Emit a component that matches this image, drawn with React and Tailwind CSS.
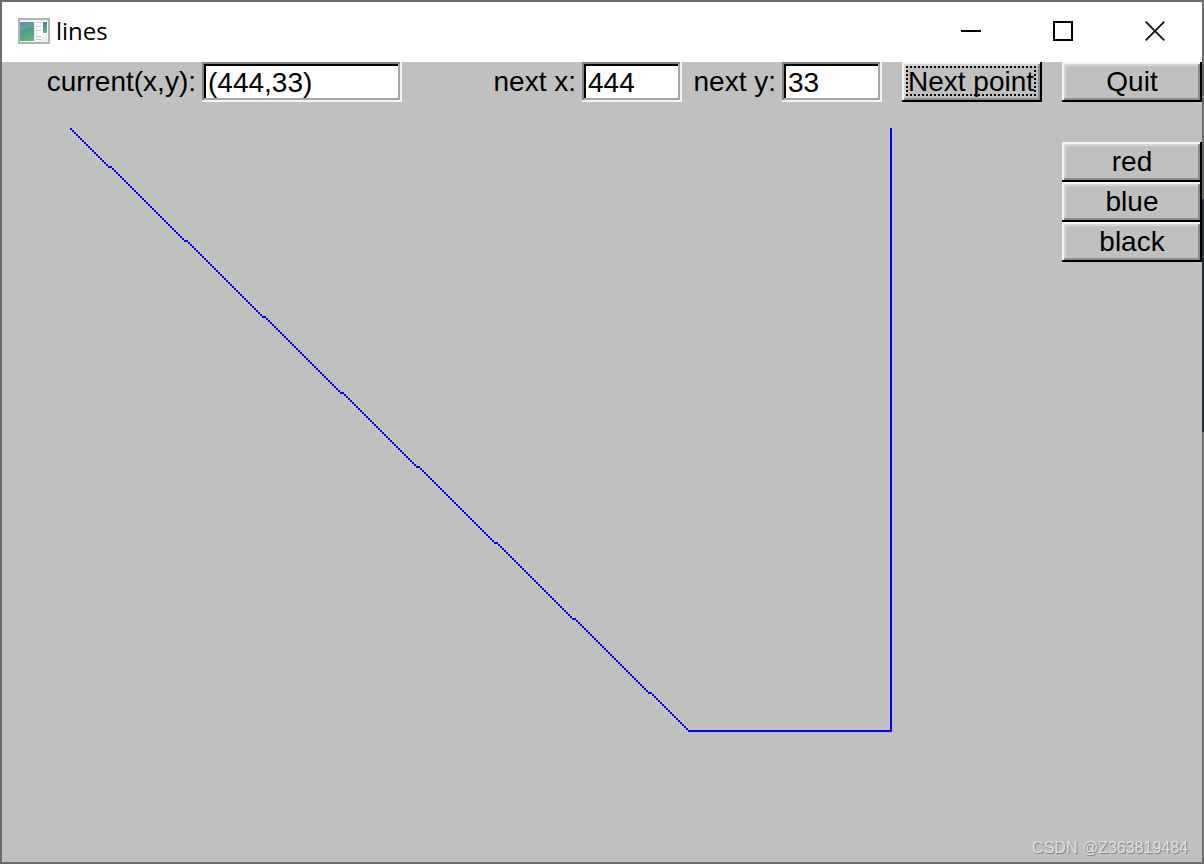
import { useState } from 'react';

const raised =
    'h-10 w-[140px] shrink-0 bg-[#c0c0c0] text-center text-[28px] leading-10 shadow-[inset_-2px_-2px_#000000,inset_2px_2px_#f4f4f4,inset_-4px_-4px_#8c8c8c,inset_4px_4px_#d4d4d4]';
const sunken =
    'h-10 shrink-0 bg-white pt-px pl-1.5 pr-1 text-[28px] leading-10 outline-none shadow-[inset_-2px_-2px_#f4f4f4,inset_2px_2px_#848484,inset_-4px_-4px_#a5a5a5,inset_4px_4px_#000000]';
const label = 'shrink-0 pr-1.5 text-right text-[28px] leading-10';

const COLORS = ['red', 'blue', 'black'];

// Each logical pixel is a 2x2 block on screen
const PIXEL = 2;

// Steep-free line as a run of square pixels, without any smoothing
const pixelLine = (x1, y1, x2, y2) => {
    const rows = Math.round((y2 - y1) / PIXEL);
    const cols = Math.round((x2 - x1) / PIXEL);
    let d = '';
    for (let col = 0; col <= cols; col++) {
        const row = Math.round((col * rows) / cols);
        d += `M${x1 + col * PIXEL} ${y1 + row * PIXEL}h${PIXEL}v${PIXEL}h${-PIXEL}z`;
    }
    return d;
};

function AppIcon() {
    return (
        <svg width="32" height="26" viewBox="0 0 32 26" aria-hidden="true">
            <defs>
                <linearGradient id="pane" x1="0" y1="0" x2="0.3" y2="1">
                    <stop offset="0" stopColor="#4a7fa8" />
                    <stop offset="0.5" stopColor="#4d9a8c" />
                    <stop offset="1" stopColor="#5fb37a" />
                </linearGradient>
            </defs>
            <rect x="1" y="1" width="30" height="24" fill="#eceef1" stroke="#b0b4bb" strokeWidth="2" />
            <rect x="2" y="3" width="14" height="21" fill="#ffffff" />
            <rect x="2" y="4" width="14" height="19" fill="url(#pane)" />
            <path d="M2 14 Q8 9 16 9 V4 H2 Z" fill="#ffffff" fillOpacity="0.12" />
            <rect x="17" y="3" width="7" height="20" fill="#fafafa" />
            <path d="M18 4.5h5M18 8.5h5M18 12.5h5M18 18.5h5M18 21.5h5" stroke="#c9ccd1" />
            <rect x="24" y="3" width="6" height="13" fill="#ffffff" />
            <rect x="25" y="4" width="4" height="11" fill="url(#pane)" />
        </svg>
    );
}

function TitleBar() {
    return (
        <header className="flex h-[60px] shrink-0 items-center bg-white pb-0.5 pl-4">
            <AppIcon />
            <h1 className="ml-1.5 font-['Open_Sans','Noto_Sans',sans-serif] text-2xl leading-8">lines</h1>
            <div className="ml-auto flex h-full pr-px">
                <button type="button" aria-label="Minimize" className="flex w-[92px] items-center justify-center">
                    <svg width="20" height="20" viewBox="0 0 20 20">
                        <path d="M0 10h20" stroke="#000" strokeWidth="2" />
                    </svg>
                </button>
                <button type="button" aria-label="Maximize" className="flex w-[92px] items-center justify-center">
                    <svg width="20" height="20" viewBox="0 0 20 20">
                        <rect x="1" y="1" width="18" height="18" fill="none" stroke="#000" strokeWidth="2" />
                    </svg>
                </button>
                <button type="button" aria-label="Close" className="flex w-[92px] items-center justify-center">
                    <svg width="20" height="20" viewBox="0 0 20 20">
                        <path d="M0.7 0.7l18.6 18.6M19.3 0.7L0.7 19.3" stroke="#111" strokeWidth="1.8" />
                    </svg>
                </button>
            </div>
        </header>
    );
}

function App() {
    const [nextX, setNextX] = useState('444');
    const [nextY, setNextY] = useState('33');
    const [current, setCurrent] = useState('(444,33)');
    const [color, setColor] = useState('blue');

    return (
        <div className="flex min-h-screen flex-col bg-[linear-gradient(to_bottom,#6c6c6c_23%,#2b2d35_23%,#2b2d35_50%,#6c6c6c_50%)] font-['Liberation_Sans',Arial,sans-serif] text-black">
            <div className="flex flex-1 flex-col border-2 border-r-transparent border-y-[#6c6c6c] border-l-[#6c6c6c] bg-[#c0c0c0] bg-clip-padding">
                <TitleBar />

                <div className="flex">
                    <label htmlFor="current" className={`${label} w-[200px]`}>
                        current(x,y):
                    </label>
                    <input id="current" readOnly value={current} className={`${sunken} w-[200px]`} />
                    <label htmlFor="next-x" className={`${label} w-[180px]`}>
                        next x:
                    </label>
                    <input
                        id="next-x"
                        value={nextX}
                        onChange={(e) => setNextX(e.target.value)}
                        className={`${sunken} w-[100px]`}
                    />
                    <label htmlFor="next-y" className={`${label} w-[100px]`}>
                        next y:
                    </label>
                    <input
                        id="next-y"
                        value={nextY}
                        onChange={(e) => setNextY(e.target.value)}
                        className={`${sunken} w-[100px]`}
                    />
                    <button
                        type="button"
                        onClick={() => setCurrent(`(${nextX},${nextY})`)}
                        className={`${raised} ml-5 flex pt-1 pr-1.5 pb-1.5 pl-1`}
                    >
                        <span className="flex h-full w-full items-center justify-center border-2 border-dotted border-black pt-0.5 whitespace-nowrap">
                            Next point
                        </span>
                    </button>
                    <button type="button" className={`${raised} ml-auto`}>
                        Quit
                    </button>
                </div>

                <main className="flex flex-1">
                    <svg
                        className="h-[640px] min-w-0 flex-1"
                        fill={color}
                        shapeRendering="crispEdges"
                        role="img"
                        aria-label="Polyline"
                    >
                        <path d={pixelLine(68, 26, 686, 628)} />
                        <path d="M686 629H889V26" fill="none" stroke={color} strokeWidth={PIXEL} />
                    </svg>
                    <div className="flex flex-col pt-10">
                        {COLORS.map((name) => (
                            <button key={name} type="button" onClick={() => setColor(name)} className={raised}>
                                {name}
                            </button>
                        ))}
                    </div>
                </main>

                <footer className="pr-3.5 pb-1 text-right text-base leading-5 text-[#e2e2e2] [text-shadow:1px_1px_1px_#777777]">
                    CSDN @Z363819484
                </footer>
            </div>
        </div>
    );
}

export default App;
